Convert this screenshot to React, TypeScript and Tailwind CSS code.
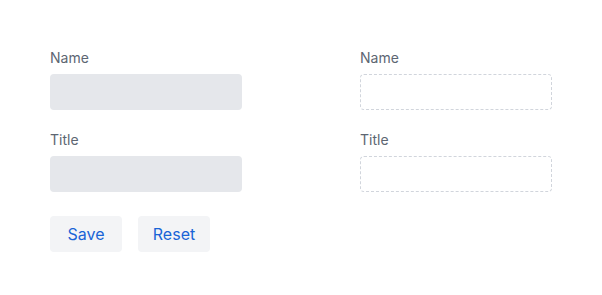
export default function App() {
  return (
    <div className="flex min-h-[295px] w-[602px] justify-between bg-white px-[50px] pt-12 font-['Inter',sans-serif]">
      <div className="flex w-[192px] flex-col">
        <label className="mb-1.5 text-sm leading-5 text-[#5d6672]">Name</label>
        <div className="h-9 rounded bg-gray-200" />
        <label className="mt-5 mb-1.5 text-sm leading-5 text-[#5d6672]">Title</label>
        <div className="h-9 rounded bg-gray-200" />
        <div className="mt-6 flex gap-4">
          <button className="h-9 w-[72px] rounded bg-gray-100 text-base text-[#1a64d6]">Save</button>
          <button className="h-9 w-[72px] rounded bg-gray-100 text-base text-[#1a64d6]">Reset</button>
        </div>
      </div>
      <div className="flex w-[192px] flex-col">
        <label className="mb-1.5 text-sm leading-5 text-[#5d6672]">Name</label>
        <div className="h-9 rounded border border-dashed border-gray-300" />
        <label className="mt-5 mb-1.5 text-sm leading-5 text-[#5d6672]">Title</label>
        <div className="h-9 rounded border border-dashed border-gray-300" />
      </div>
    </div>
  )
}
